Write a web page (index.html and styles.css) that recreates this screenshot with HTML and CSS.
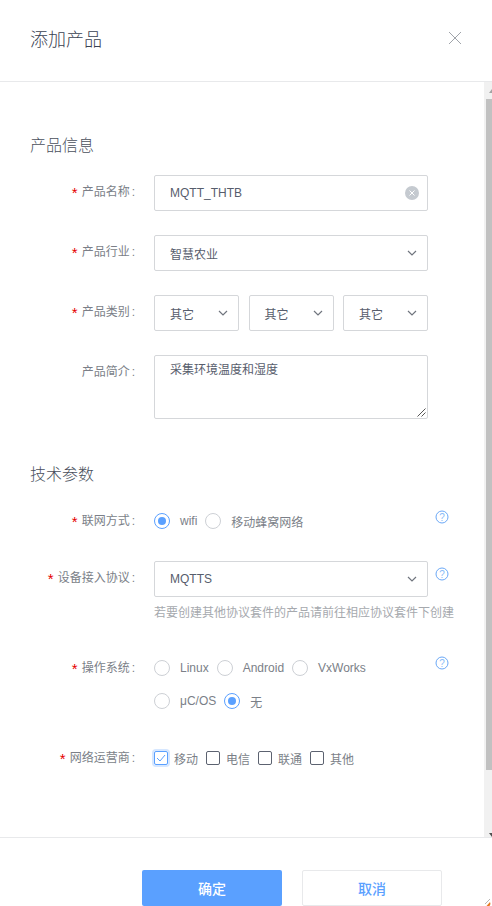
FILE: index.html
```html
<!DOCTYPE html>
<html lang="zh-CN">
  <head>
    <meta charset="UTF-8" />
    <meta name="viewport" content="width=device-width, initial-scale=1.0" />
    <title>添加产品</title>
    <link rel="stylesheet" href="styles.css">
  </head>
  <body>
    <div class="dialog">
      <div class="dialog-header">
        <span class="dialog-title">添加产品</span>
        <svg class="close-icon" width="14" height="14" viewBox="0 0 14 14">
          <path d="M1 1L13 13M13 1L1 13" stroke="#a0a4aa" stroke-width="1" fill="none" />
        </svg>
      </div>

      <div class="dialog-body">
        <div class="form-scroll">
          <h3 class="section-title first">产品信息</h3>

          <div class="form-row row-name">
            <label class="form-label required">产品名称<span class="colon">:</span></label>
            <div class="field input-box">
              <span>MQTT_THTB</span>
              <svg class="clear-icon" width="14" height="14" viewBox="0 0 14 14">
                <circle cx="7" cy="7" r="7" fill="#c5cad0" />
                <path d="M4.5 4.5L9.5 9.5M9.5 4.5L4.5 9.5" stroke="#fff" stroke-width="1" fill="none" />
              </svg>
            </div>
          </div>

          <div class="form-row row-select">
            <label class="form-label required">产品行业<span class="colon">:</span></label>
            <div class="field input-box">
              <span>智慧农业</span>
              <svg class="arrow" width="10" height="6" viewBox="0 0 10 6"><path d="M1 1L5 5L9 1" /></svg>
            </div>
          </div>

          <div class="form-row row-select">
            <label class="form-label required">产品类别<span class="colon">:</span></label>
            <div class="field triple">
              <div class="input-box">
                <span>其它</span>
                <svg class="arrow" width="10" height="6" viewBox="0 0 10 6"><path d="M1 1L5 5L9 1" /></svg>
              </div>
              <div class="input-box">
                <span>其它</span>
                <svg class="arrow" width="10" height="6" viewBox="0 0 10 6"><path d="M1 1L5 5L9 1" /></svg>
              </div>
              <div class="input-box">
                <span>其它</span>
                <svg class="arrow" width="10" height="6" viewBox="0 0 10 6"><path d="M1 1L5 5L9 1" /></svg>
              </div>
            </div>
          </div>

          <div class="form-row row-select">
            <label class="form-label">产品简介<span class="colon">:</span></label>
            <div class="field textarea-box">
              采集环境温度和湿度
              <svg class="resize-grip" width="9" height="9" viewBox="0 0 9 9">
                <path d="M0.5 8.5L8.5 0.5M4.5 8.5L8.5 4.5" stroke="#555" stroke-width="1" fill="none" />
              </svg>
            </div>
          </div>

          <h3 class="section-title second">技术参数</h3>

          <div class="form-row row-net">
            <label class="form-label required">联网方式<span class="colon">:</span></label>
            <div class="options">
              <span class="radio checked"></span><span class="opt-text">wifi</span>
              <span class="radio"></span><span class="opt-text">移动蜂窝网络</span>
            </div>
            <svg class="help-icon" width="14" height="14" viewBox="0 0 14 14">
              <circle cx="7" cy="7" r="6" />
              <text x="7" y="10.5" text-anchor="middle">?</text>
            </svg>
          </div>

          <div class="form-row row-protocol">
            <label class="form-label required">设备接入协议<span class="colon">:</span></label>
            <div class="field input-box">
              <span>MQTTS</span>
              <svg class="arrow" width="10" height="6" viewBox="0 0 10 6"><path d="M1 1L5 5L9 1" /></svg>
            </div>
            <svg class="help-icon" width="14" height="14" viewBox="0 0 14 14">
              <circle cx="7" cy="7" r="6" />
              <text x="7" y="10.5" text-anchor="middle">?</text>
            </svg>
          </div>
          <p class="form-tip">若要创建其他协议套件的产品请前往相应协议套件下创建</p>

          <div class="form-row row-os">
            <label class="form-label required">操作系统<span class="colon">:</span></label>
            <div class="options os-options">
              <div class="os-line">
                <span class="radio"></span><span class="opt-text">Linux</span>
                <span class="radio"></span><span class="opt-text">Android</span>
                <span class="radio"></span><span class="opt-text">VxWorks</span>
              </div>
              <div class="os-line">
                <span class="radio"></span><span class="opt-text">μC/OS</span>
                <span class="radio checked"></span><span class="opt-text">无</span>
              </div>
            </div>
            <svg class="help-icon" width="14" height="14" viewBox="0 0 14 14">
              <circle cx="7" cy="7" r="6" />
              <text x="7" y="10.5" text-anchor="middle">?</text>
            </svg>
          </div>

          <div class="form-row row-carrier">
            <label class="form-label required">网络运营商<span class="colon">:</span></label>
            <div class="options">
              <span class="checkbox checked">
                <svg width="10" height="8" viewBox="0 0 10 8"><path d="M1 4L4 7L9 1" /></svg>
              </span><span class="check-text">移动</span>
              <span class="checkbox"></span><span class="check-text">电信</span>
              <span class="checkbox"></span><span class="check-text">联通</span>
              <span class="checkbox"></span><span class="check-text">其他</span>
            </div>
          </div>
        </div>

        <div class="scrollbar">
          <span class="scroll-up"></span>
          <span class="scroll-thumb"></span>
          <span class="scroll-down"></span>
        </div>
      </div>

      <div class="dialog-footer">
        <button class="btn btn-primary">确定</button>
        <button class="btn btn-cancel">取消</button>
      </div>
    </div>

    <!-- corner of a floating widget, cut off by the window -->
    <svg class="corner-badge" width="10" height="10" viewBox="0 0 10 10">
      <path d="M3 8L8 3" stroke="#b5b5b5" stroke-width="1" fill="none" />
      <path d="M4.5 10L8 6L8.5 8L7.5 10Z" fill="#e8791e" />
    </svg>
  </body>
</html>
```

FILE: styles.css
```css
* {
  box-sizing: border-box;
}
html,
body {
  height: 100%;
  margin: 0;
  overflow: hidden;
}
body {
  font-family: "Liberation Sans", "Noto Sans CJK SC", sans-serif;
  font-size: 12px;
  color: #575d6c;
  background: white;
}
.dialog {
  display: flex;
  flex-direction: column;
  height: 906px;
}
.dialog-header {
  display: flex;
  justify-content: space-between;
  align-items: center;
  flex: none;
  height: 82px;
  padding: 0 30px 5px 30px;
  border-bottom: 1px solid #e8e9eb;
}
.dialog-title {
  font-size: 18px;
  font-weight: 300;
  color: #3a4252;
}
.dialog-body {
  display: flex;
  flex: none;
  height: 755px;
}
.form-scroll {
  flex: 1;
  padding: 0 30px;
}
.section-title {
  margin: 0;
  font-size: 16px;
  font-weight: 300;
  line-height: 22px;
  color: #494f5c;
}
.section-title.first {
  margin-top: 53px;
}
.section-title.second {
  margin-top: 45px;
}
.form-row {
  display: flex;
  align-items: flex-start;
}
.row-name {
  margin-top: 18px;
}
.row-select {
  margin-top: 24px;
}
.row-net {
  margin-top: 25px;
}
.row-protocol {
  margin-top: 29px;
}
.row-os {
  margin-top: 35px;
}
.row-carrier {
  margin-top: 19px;
}
.form-label {
  flex: none;
  width: 106px;
  margin-right: 18px;
  line-height: 34px;
  text-align: right;
  color: #7b7f88;
}
.form-label.required::before {
  content: "*";
  margin-right: 4px;
  font-size: 15px;
  vertical-align: -2px;
  color: #e60000;
}
.colon {
  margin: 0 1px 0 2px;
}
.field {
  flex: none;
  width: 274px;
}
.input-box {
  display: flex;
  justify-content: space-between;
  align-items: center;
  height: 36px;
  padding: 0 10px 0 15px;
  border: 1px solid #d5d7da;
  border-radius: 2px;
  color: #575d6c;
}
.clear-icon {
  margin-right: -2px;
}
.triple {
  display: flex;
  justify-content: space-between;
}
.triple .input-box {
  width: 85px;
}
.textarea-box {
  position: relative;
  height: 64px;
  padding: 6px 15px;
  line-height: 16px;
  border: 1px solid #d5d7da;
  border-radius: 2px;
}
.resize-grip {
  position: absolute;
  right: 1px;
  bottom: 1px;
}
.arrow {
  flex: none;
}
.arrow path {
  fill: none;
  stroke: #70757e;
  stroke-width: 1.2;
}
.options {
  display: flex;
  align-items: center;
  height: 30px;
  color: #7b7f88;
}
.row-net .options {
  width: 274px;
  height: 20px;
}
.row-net .form-label,
.row-os .form-label {
  line-height: 20px;
}
.row-carrier .form-label {
  line-height: 30px;
}
.radio {
  flex: none;
  position: relative;
  width: 16px;
  height: 16px;
  border: 1px solid #cdd0d5;
  border-radius: 50%;
}
.radio.checked {
  border-color: #5aa0ff;
}
.radio.checked::after {
  content: "";
  position: absolute;
  top: 3px;
  left: 3px;
  width: 8px;
  height: 8px;
  border-radius: 50%;
  background: #5aa0ff;
}
.opt-text {
  margin-left: 10px;
  margin-right: 8px;
}
.os-options {
  display: block;
  height: auto;
  width: 274px;
}
.os-line {
  display: flex;
  align-items: center;
  height: 20px;
  margin-bottom: 13px;
}
.help-icon {
  flex: none;
  margin-left: 7px;
  margin-top: -1px;
}
.row-protocol .help-icon {
  margin-top: 6px;
}
.row-os .help-icon {
  margin-top: -2px;
}
.help-icon circle {
  fill: none;
  stroke: #6aa8f7;
}
.help-icon text {
  font-size: 10px;
  fill: #8bbcf7;
}
.form-tip {
  margin: 6px 0 0 124px;
  font-size: 12px;
  line-height: 20px;
  white-space: nowrap;
  color: #a6a9ae;
}
.checkbox {
  flex: none;
  display: flex;
  align-items: center;
  justify-content: center;
  width: 14px;
  height: 14px;
  border: 1px solid #5c6270;
  border-radius: 2px;
}
.checkbox.checked {
  border-color: #5aa0ff;
  box-shadow: 0 0 0 2px #d6e7ff;
}
.checkbox path {
  fill: none;
  stroke: #5aa0ff;
}
.check-text {
  margin-left: 6px;
  margin-right: 8px;
}
.scrollbar {
  display: flex;
  flex-direction: column;
  flex: none;
  width: 9px;
  overflow: hidden;
  background: #f1f1f1;
}
.scroll-up,
.scroll-down {
  flex: none;
  width: 0;
  height: 0;
  margin-left: 5px;
  border-left: 3px solid transparent;
  border-right: 3px solid transparent;
}
.scroll-up {
  margin-top: 7px;
  border-bottom: 4px solid #a3a3a3;
}
.scroll-thumb {
  flex: none;
  height: 671px;
  margin: 6px 0 0 2px;
  background: #c1c1c1;
}
.scroll-down {
  margin-top: auto;
  border-top: 4px solid #505050;
}
.dialog-footer {
  display: flex;
  justify-content: flex-end;
  gap: 20px;
  flex: none;
  height: 69px;
  padding: 32px 50px 0 0;
  border-top: 1px solid #e8e9eb;
}
.btn {
  width: 140px;
  height: 36px;
  border-radius: 2px;
  font-family: inherit;
  font-size: 14px;
  font-weight: 500;
}
.btn-primary {
  border: none;
  background: #5aa0ff;
  color: white;
}
.btn-cancel {
  border: 1px solid #e8e9eb;
  background: white;
  color: #5aa0ff;
}
.corner-badge {
  position: absolute;
  right: 0;
  bottom: 0;
}
```
